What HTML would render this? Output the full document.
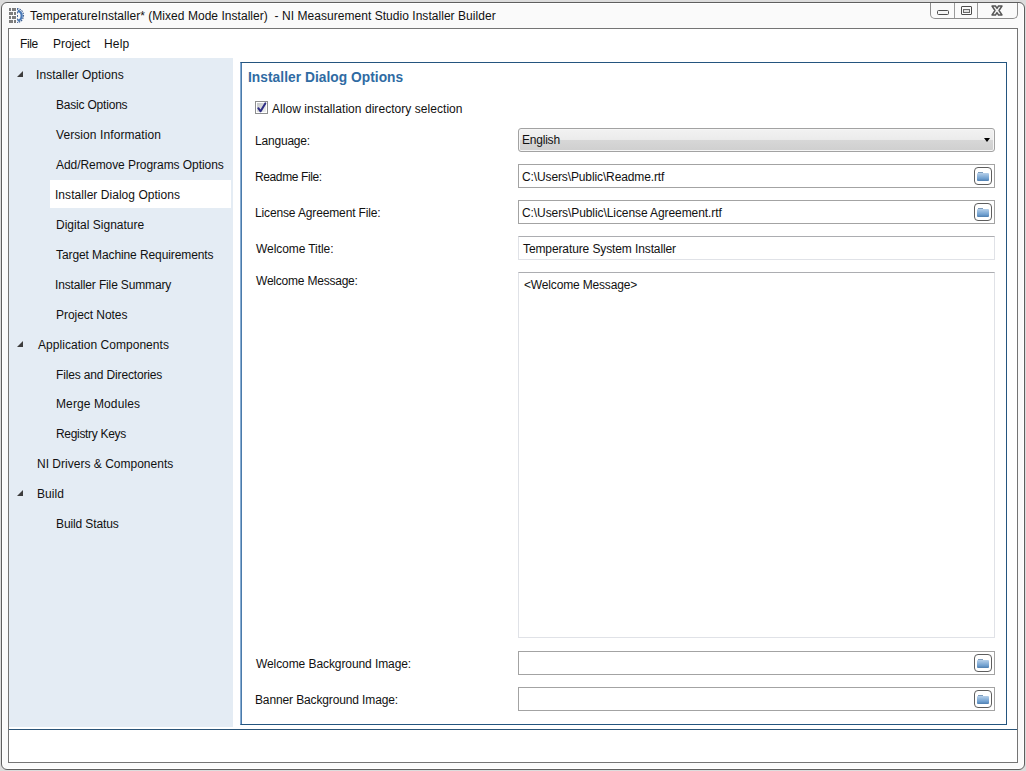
<!DOCTYPE html>
<html><head><meta charset="utf-8">
<style>
html,body{margin:0;padding:0;}
body{width:1026px;height:771px;position:relative;overflow:hidden;background:#dcdcdc;font-family:"Liberation Sans",sans-serif;}
.a{position:absolute;box-sizing:border-box;}
.t{position:absolute;white-space:pre;font-size:12px;line-height:14px;color:#111;}
#win{left:1px;top:2px;width:1024px;height:768px;border:1px solid #5e5e5e;border-radius:6px;background:#fafafa;box-shadow:inset 0 0 0 1px #ffffff;}
#caps{left:930px;top:3px;width:88px;height:16px;border:1px solid #8c8c8c;border-top:none;border-radius:0 0 5px 5px;background:#fafafa;}
#client{left:8px;top:28px;width:1010px;height:735px;border:1px solid #747474;background:#fff;}
#side{left:9px;top:58px;width:224px;height:669px;background:#e4ecf4;}
#sel{left:50px;top:180px;width:181px;height:28px;background:#fff;}
#panel{left:240px;top:62px;width:767px;height:663px;border:1px solid #24557f;border-left:1px solid #86acd2;box-shadow:inset 1px 0 0 #4a7aaa;}
#status{left:9px;top:729px;width:1008px;height:1px;background:#2a5478;}
.tri{position:absolute;width:0;height:0;border-style:solid;border-width:0 0 6px 6px;border-color:transparent transparent #3c3c3c transparent;}
.tb{position:absolute;box-sizing:border-box;height:24px;border:1px solid #a3a3a3;background:#fff;}
.tb2{position:absolute;box-sizing:border-box;border:1px solid #e0e2e7;border-top-color:#acadb1;background:#fff;}
.btn{position:absolute;box-sizing:border-box;width:18px;height:18px;border:1px solid #5e5e5e;border-radius:4px;background:#fff;}
.fold{position:absolute;left:2px;top:5px;width:12px;height:8px;border-radius:1px;background:linear-gradient(#b6d0ea,#6f9fcf 70%,#4f7fb0);}
.fold:before{content:"";position:absolute;left:1px;top:-1px;width:5px;height:1px;background:#7d9dbd;}
</style></head><body>
<div id="win" class="a"></div>
<div id="caps" class="a"></div>
<div class="a" style="left:954px;top:3px;width:1px;height:15px;background:#9a9a9a"></div>
<div class="a" style="left:977px;top:3px;width:1px;height:15px;background:#9a9a9a"></div>
<div class="a" style="left:937px;top:10px;width:12px;height:5px;border:1.5px solid #4c4c4c;border-radius:1.5px;background:#f4f4f4"></div>
<div class="a" style="left:961px;top:6px;width:11px;height:9px;border:1.5px solid #4c4c4c;border-radius:1px;background:#fafafa"></div>
<div class="a" style="left:963px;top:9px;width:7px;height:4px;border:1px solid #6a6a6a;background:#e0e0e0"></div>
<svg class="a" style="left:991px;top:5px" width="12" height="11" viewBox="0 0 12 11">
<path d="M1 1 L4.5 1 L6 3.3 L7.5 1 L11 1 L8 5.5 L11 10 L7.5 10 L6 7.7 L4.5 10 L1 10 L4 5.5 Z" fill="#f0f0f0" stroke="#555" stroke-width="1.4" stroke-linejoin="round"/>
</svg>
<svg class="a" style="left:6px;top:4px" width="24" height="24" viewBox="6 4 24 24">
<g fill="#7d7d7d">
<rect x="9" y="8" width="2" height="3"/><rect x="12" y="8" width="4" height="3"/>
<rect x="9" y="12" width="4" height="3"/><rect x="14" y="12" width="2" height="3"/>
<rect x="9" y="16" width="2" height="3"/><rect x="12" y="16" width="4" height="3"/>
<rect x="9" y="20" width="4" height="3"/><rect x="14" y="20" width="2" height="3"/>
</g>
<path d="M17 8.5 A6.5 7 0 0 1 17 22.5" fill="none" stroke="#3f5f8f" stroke-width="1.1" stroke-dasharray="1.6 0.9"/>
<path d="M17.5 8 V23" fill="none" stroke="#4f6f9f" stroke-width="1" stroke-dasharray="2 1.5"/>
<path d="M17.8 11 A3.6 4.4 0 0 1 17.8 20.5" fill="none" stroke="#4a7ab8" stroke-width="2.3"/>
</svg>

<div id="client" class="a"></div>
<div id="side" class="a"></div>
<div id="sel" class="a"></div>
<div class="tri" style="left:17px;top:71px"></div>
<div class="tri" style="left:17px;top:341px"></div>
<div class="tri" style="left:17px;top:490px"></div>

<div id="panel" class="a"></div>

<div class="a" style="left:255px;top:101px;width:13px;height:13px;border:1px solid #8e8f8f;background:#fff"></div>
<div class="a" style="left:257px;top:103px;width:9px;height:9px;background:linear-gradient(135deg,#c4c6c8,#f0f2f2)"></div>
<svg class="a" style="left:255px;top:101px" width="13" height="13" viewBox="0 0 13 13">
<path d="M3.3 7.2 L5.6 10.3 L10.3 2.4" fill="none" stroke="#2d2d85" stroke-width="2" stroke-linecap="round" stroke-linejoin="round"/>
</svg>

<div class="a" style="left:518px;top:128px;width:477px;height:24px;border:1px solid #a2a2a2;border-radius:3px;background:linear-gradient(#f2f2f2 0%,#ebebeb 50%,#d7d7d7 50%,#cfcfcf 100%);box-shadow:inset 0 0 0 1px #f6f6f6"></div>
<div class="tri" style="left:984px;top:138px;border-width:4px 3px 0 3px;border-color:#000 transparent transparent transparent"></div>

<div class="tb" style="left:518px;top:164px;width:477px"><div class="btn" style="left:455px;top:2px"><div class="fold"></div></div></div>
<div class="tb" style="left:518px;top:200px;width:477px"><div class="btn" style="left:455px;top:2px"><div class="fold"></div></div></div>
<div class="tb2" style="left:518px;top:236px;width:477px;height:24px"></div>
<div class="tb2" style="left:518px;top:272px;width:477px;height:366px"></div>
<div class="tb" style="left:518px;top:651px;width:477px"><div class="btn" style="left:455px;top:2px"><div class="fold"></div></div></div>
<div class="tb" style="left:518px;top:687px;width:477px"><div class="btn" style="left:455px;top:2px"><div class="fold"></div></div></div>

<div id="status" class="a"></div>
<div class="t" style="left:30px;top:9px;letter-spacing:0.04px;">TemperatureInstaller* (Mixed Mode Installer)  - NI Measurement Studio Installer Builder</div>
<div class="t" style="left:20px;top:37px;letter-spacing:-0.35px;">File</div>
<div class="t" style="left:53px;top:37px;letter-spacing:-0.033px;">Project</div>
<div class="t" style="left:104px;top:37px;letter-spacing:0.2px;">Help</div>
<div class="t" style="left:36px;top:68px;letter-spacing:0.059px;">Installer Options</div>
<div class="t" style="left:56px;top:98px;letter-spacing:-0.202px;">Basic Options</div>
<div class="t" style="left:56px;top:128px;letter-spacing:0.086px;">Version Information</div>
<div class="t" style="left:56px;top:158px;letter-spacing:-0.064px;">Add/Remove Programs Options</div>
<div class="t" style="left:55px;top:188px;letter-spacing:0.04px;">Installer Dialog Options</div>
<div class="t" style="left:56px;top:218px;letter-spacing:0.011px;">Digital Signature</div>
<div class="t" style="left:56px;top:248px;letter-spacing:-0.098px;">Target Machine Requirements</div>
<div class="t" style="left:55px;top:278px;letter-spacing:-0.145px;">Installer File Summary</div>
<div class="t" style="left:56px;top:308px;letter-spacing:-0.05px;">Project Notes</div>
<div class="t" style="left:38px;top:338px;letter-spacing:0.039px;">Application Components</div>
<div class="t" style="left:56px;top:368px;letter-spacing:-0.15px;">Files and Directories</div>
<div class="t" style="left:56px;top:397px;letter-spacing:0.105px;">Merge Modules</div>
<div class="t" style="left:56px;top:427px;letter-spacing:-0.318px;">Registry Keys</div>
<div class="t" style="left:37px;top:457px;letter-spacing:0.01px;">NI Drivers &amp; Components</div>
<div class="t" style="left:37px;top:487px;letter-spacing:0.05px;">Build</div>
<div class="t" style="left:56px;top:517px;letter-spacing:-0.113px;">Build Status</div>
<div class="t" style="left:248px;top:70px;letter-spacing:0.036px;font-weight:bold;font-size:13.75px;line-height:16px;color:#2f6ba3">Installer Dialog Options</div>
<div class="t" style="left:272px;top:102px;letter-spacing:0.047px;">Allow installation directory selection</div>
<div class="t" style="left:255px;top:134px;letter-spacing:-0.195px;">Language:</div>
<div class="t" style="left:255px;top:170px;letter-spacing:-0.383px;">Readme File:</div>
<div class="t" style="left:255px;top:206px;letter-spacing:-0.139px;">License Agreement File:</div>
<div class="t" style="left:256px;top:242px;letter-spacing:-0.075px;">Welcome Title:</div>
<div class="t" style="left:256px;top:274px;letter-spacing:-0.217px;">Welcome Message:</div>
<div class="t" style="left:256px;top:657px;letter-spacing:-0.083px;">Welcome Background Image:</div>
<div class="t" style="left:255px;top:693px;letter-spacing:-0.129px;">Banner Background Image:</div>
<div class="t" style="left:522px;top:133px;letter-spacing:-0.213px;">English</div>
<div class="t" style="left:522px;top:170px;letter-spacing:-0.12px;">C:\Users\Public\Readme.rtf</div>
<div class="t" style="left:522px;top:206px;letter-spacing:-0.082px;">C:\Users\Public\License Agreement.rtf</div>
<div class="t" style="left:523px;top:242px;letter-spacing:-0.11px;">Temperature System Installer</div>
<div class="t" style="left:524px;top:278px;letter-spacing:-0.164px;">&lt;Welcome Message&gt;</div>
</body></html>
